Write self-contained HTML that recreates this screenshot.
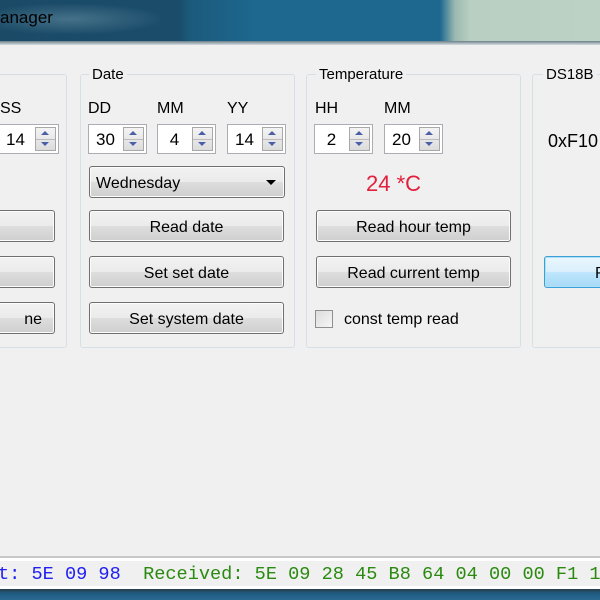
<!DOCTYPE html>
<html><head><style>
body{margin:0;width:600px;height:600px;overflow:hidden;background:#f0f0f0;font-family:"Liberation Sans",sans-serif;font-size:16px;color:#000;position:relative}
.a{position:absolute}
.title{left:0;top:0;width:600px;height:41px;background:linear-gradient(90deg,#1a4a66 0,#1b4d6b 180px,#1c5a7c 190px,#1e6890 260px,#1e6890 440px,#9bb9b0 455px,#b8cfc2 470px,#bcd2c4 600px)}
.glow{left:-20px;top:4px;width:180px;height:30px;border-radius:15px;background:radial-gradient(ellipse at center,rgba(150,185,200,.35),rgba(120,160,180,0) 75%)}
.sep{left:0;top:41px;width:600px;height:4px;background:linear-gradient(#6b7f8a,#d8dde0)}
.grp{border:1px solid #d5dfe5;border-radius:3px}
.lbl{background:#f0f0f0;padding:0 3px;font-size:15px}
.num{background:#fff;border:1px solid #abadb3;height:30px;width:59px;box-sizing:border-box}
.num span{position:absolute;left:0;width:33px;text-align:center;top:5px;font-size:17px}
.spin{position:absolute;right:2px;top:2px;width:21px;height:24px;border:1px solid #a8a8a8;background:linear-gradient(#f4f4f4,#dcdcdc);box-sizing:border-box}
.spin:before{content:"";position:absolute;left:5px;top:3px;border:4px solid transparent;border-bottom:4px solid #4a5fa8;border-top:0}
.spin:after{content:"";position:absolute;left:5px;top:14px;border:4px solid transparent;border-top:4px solid #4a5fa8;border-bottom:0}
.spin i{position:absolute;left:0;right:0;top:11px;border-top:1px solid #bbb}
.btn{border:1px solid #707070;border-radius:3px;background:linear-gradient(#f2f2f2 0,#ebebeb 50%,#dddddd 51%,#cfcfcf 100%);box-sizing:border-box;height:32px;text-align:center;line-height:33px;font-size:16px;box-shadow:inset 0 0 0 1px #fcfcfc}
.mono{font-family:"Liberation Mono",monospace;font-size:18.6px}
</style></head><body>
<div class="a title"></div>
<div class="a glow"></div>
<div class="a" style="left:0;top:8px;font-size:17px;color:#000">anager</div>
<div class="a sep"></div>

<div class="a grp" style="left:-10px;top:74px;width:75px;height:272px"></div>
<div class="a" style="left:0;top:100px;font-size:16px">SS</div>
<div class="a num" style="left:-10px;top:124px;width:69px"><span style="left:8px">14</span><div class="spin"><i></i></div></div>
<div class="a btn" style="left:-20px;top:210px;width:75px"></div>
<div class="a btn" style="left:-20px;top:256px;width:75px"></div>
<div class="a btn" style="left:-20px;top:302px;width:75px;text-align:right;padding-right:12px">ne</div>

<div class="a grp" style="left:80px;top:74px;width:213px;height:272px"></div>
<div class="a lbl" style="left:89px;top:66px">Date</div>
<div class="a" style="left:88px;top:100px">DD</div>
<div class="a" style="left:157px;top:100px">MM</div>
<div class="a" style="left:227px;top:100px">YY</div>
<div class="a num" style="left:88px;top:124px"><span>30</span><div class="spin"><i></i></div></div>
<div class="a num" style="left:157px;top:124px"><span>4</span><div class="spin"><i></i></div></div>
<div class="a num" style="left:227px;top:124px"><span>14</span><div class="spin"><i></i></div></div>
<div class="a btn" style="left:89px;top:166px;width:196px;text-align:left;padding-left:6px">Wednesday<span class="a" style="right:8px;top:13px;border:5px solid transparent;border-top:5px solid #000;border-bottom:0"></span></div>
<div class="a btn" style="left:89px;top:210px;width:195px">Read date</div>
<div class="a btn" style="left:89px;top:256px;width:195px">Set set date</div>
<div class="a btn" style="left:89px;top:302px;width:195px">Set system date</div>

<div class="a grp" style="left:306px;top:74px;width:213px;height:272px"></div>
<div class="a lbl" style="left:316px;top:66px">Temperature</div>
<div class="a" style="left:315px;top:100px">HH</div>
<div class="a" style="left:384px;top:100px">MM</div>
<div class="a num" style="left:314px;top:124px"><span>2</span><div class="spin"><i></i></div></div>
<div class="a num" style="left:384px;top:124px"><span>20</span><div class="spin"><i></i></div></div>
<div class="a" style="left:366px;top:171px;font-size:22px;color:#e0203c">24 *C</div>
<div class="a btn" style="left:316px;top:210px;width:195px">Read hour temp</div>
<div class="a btn" style="left:316px;top:256px;width:195px">Read current temp</div>
<div class="a" style="left:315px;top:310px;width:18px;height:18px;border:1px solid #8e8f8f;box-sizing:border-box;background:linear-gradient(135deg,#dcdcdc,#f6f6f6)"></div>
<div class="a" style="left:344px;top:311px">const temp read</div>

<div class="a grp" style="left:532px;top:74px;width:90px;height:272px"></div>
<div class="a lbl" style="left:543px;top:66px">DS18B</div>
<div class="a" style="left:548px;top:131px;font-size:18px">0xF10</div>
<div class="a btn" style="left:544px;top:256px;width:80px;border-color:#3c9fd8;box-shadow:inset 0 0 0 1px #aee0f8;background:linear-gradient(#eaf6fd,#d9f0fc 50%,#bee6fd 51%,#a7d9f5);text-align:left;padding-left:50px">R</div>

<div class="a" style="left:0;top:556px;width:600px;height:2px;background:#c8c8c8"></div>
<div class="a" style="left:0;top:558px;width:600px;height:3px;background:#fff"></div>
<div class="a mono" style="left:-2px;top:564px;white-space:pre"><span style="color:#2020f0">t: 5E 09 98</span>  <span style="color:#2a8a10">Received: 5E 09 28 45 B8 64 04 00 00 F1 1</span></div>
<div class="a" style="left:0;top:586px;width:600px;height:3px;background:#fff"></div>
<div class="a" style="left:0;top:589px;width:600px;height:11px;background:linear-gradient(#2b3d4a,#1e5a80 40%,#2a6a92)"></div>
</body></html>
